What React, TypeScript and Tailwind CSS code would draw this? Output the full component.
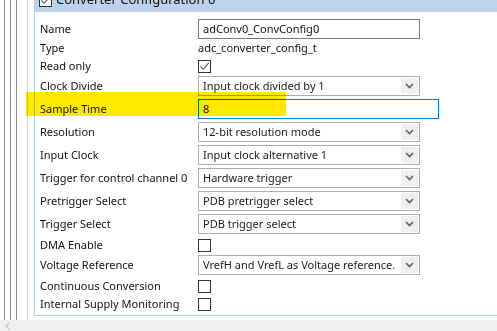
import React from "react";

const font = { fontFamily: '"Noto Sans", "Open Sans", sans-serif' };

function Check({ checked }: { checked?: boolean }) {
  return (
    <div className="w-[13px] h-[13px] border border-[#333333] bg-white flex items-center justify-center shrink-0">
      {checked && (
        <svg width="11" height="11" viewBox="0 0 11 11">
          <path d="M1.5 5.5 L4.2 8.3 L9.8 1.8" fill="none" stroke="#555555" strokeWidth="1.1" />
        </svg>
      )}
    </div>
  );
}

function Select({ value }: { value: string }) {
  return (
    <div className="w-[222px] h-[20px] border border-[#adadad] bg-white flex items-stretch">
      <div className="flex-1 pl-[4px] flex items-center text-[#1a1a1a] whitespace-nowrap overflow-hidden">{value}</div>
      <div className="w-[17px] my-px mr-px bg-[#efefef] flex items-center justify-center">
        <svg width="9" height="6" viewBox="0 0 9 6">
          <path d="M1 1 L4.5 4.5 L8 1" fill="none" stroke="#606060" strokeWidth="1.6" />
        </svg>
      </div>
    </div>
  );
}

type Row =
  | { label: string; kind: "select"; value: string }
  | { label: string; kind: "check"; checked?: boolean };

const rows: Row[] = [
  { label: "Clock Divide", kind: "select", value: "Input clock divided by 1" },
  { label: "Sample Time", kind: "select", value: "8" },
  { label: "Resolution", kind: "select", value: "12-bit resolution mode" },
  { label: "Input Clock", kind: "select", value: "Input clock alternative 1" },
  { label: "Trigger for control channel 0", kind: "select", value: "Hardware trigger" },
  { label: "Pretrigger Select", kind: "select", value: "PDB pretrigger select" },
  { label: "Trigger Select", kind: "select", value: "PDB trigger select" },
  { label: "DMA Enable", kind: "check" },
  { label: "Voltage Reference", kind: "select", value: "VrefH and VrefL as Voltage reference." },
  { label: "Continuous Conversion", kind: "check" },
  { label: "Internal Supply Monitoring", kind: "check" },
];

export default function App() {
  return (
    <div className="relative w-[497px] h-[331px] bg-white flex flex-col overflow-hidden text-[11px] text-[#111111]" style={font}>
      <div className="flex h-[320px]">
        {/* tree guide lines */}
        <div className="w-[34px] shrink-0 flex">
          <div className="ml-[4px] w-px bg-[#8c8c8c]" />
          <div className="ml-[5px] w-px bg-[#8c8c8c]" />
          <div className="ml-[5px] w-px bg-[#8c8c8c]" />
          <div className="ml-[10px] w-px bg-[#c5d9ee]" />
        </div>

        <div className="flex-1 h-[316px] border-l border-b border-[#b5cde6] flex flex-col">
          <div className="-mt-[12px] h-[24px] bg-[#bdd3ec] flex items-center pl-[4px] gap-[4px]">
            <Check checked />
            <span className="text-[13px]">Converter Configuration 0</span>
          </div>

          <div className="pt-[6px] pl-[5px] flex flex-col">
            <div className="h-[22px] flex items-center">
              <div className="w-[158px]">Name</div>
              <div className="w-[222px] h-[20px] border border-[#7a7a7a] pl-[4px] flex items-center">adConv0_ConvConfig0</div>
            </div>
            <div className="h-[17px] flex items-center">
              <div className="w-[158px]">Type</div>
              <div>adc_converter_config_t</div>
            </div>
            <div className="h-[18px] flex items-center">
              <div className="w-[158px]">Read only</div>
              <Check checked />
            </div>

            {rows.map((r) =>
              r.kind === "select" ? (
                <div key={r.label} className="h-[23px] flex items-start pt-px">
                  <div className="w-[158px] h-[20px] flex items-center whitespace-nowrap">{r.label}</div>
                  {r.label === "Sample Time" ? (
                    <div className="w-[241px] h-[20px] border border-[#0078d7] bg-white pl-[4px] flex items-center">{r.value}</div>
                  ) : (
                    <Select value={r.value} />
                  )}
                </div>
              ) : (
                <div key={r.label} className="h-[18px] flex items-center">
                  <div className="w-[158px] whitespace-nowrap">{r.label}</div>
                  <Check checked={r.checked} />
                </div>
              )
            )}
          </div>
        </div>
      </div>

      <div className="h-[11px] bg-[#f0f0f0] flex items-center pl-[5px]">
        <svg width="5" height="8" viewBox="0 0 5 8">
          <path d="M4 1 L1 4 L4 7" fill="none" stroke="#c2c2c2" strokeWidth="1.2" />
        </svg>
      </div>

      {/* highlighter mark */}
      <div className="absolute left-[26px] top-[92px] w-[260px] h-[24px] bg-[#ffe900] mix-blend-multiply pointer-events-none" />
    </div>
  );
}
